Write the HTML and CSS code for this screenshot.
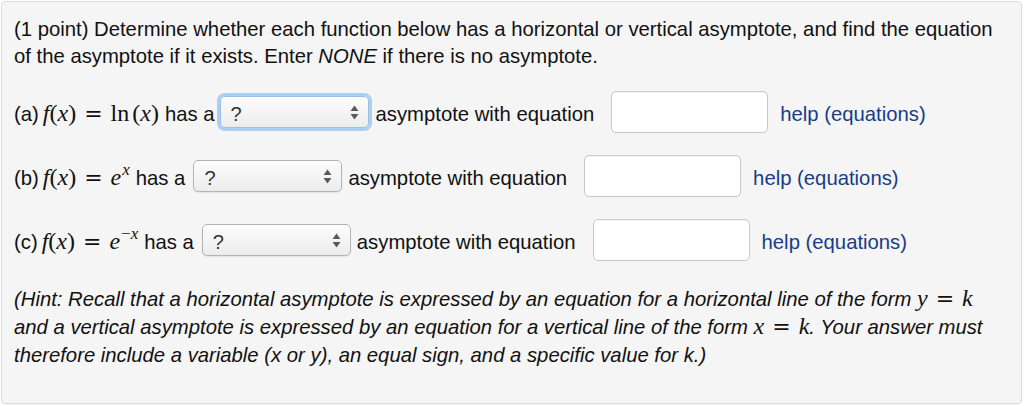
FILE: index.html
```html
<!DOCTYPE html>
<html>
<head>
<meta charset="utf-8">
<link rel="stylesheet" href="styles.css">
</head>
<body>
<div class="problem">
  <p class="intro">(1 point) Determine whether each function below has a horizontal or vertical asymptote, and find the equation<br>of the asymptote if it exists. Enter <em>NONE</em> if there is no asymptote.</p>

  <div class="row">
    <span class="txt">(a)</span>
    <span class="math"><i>f</i>(<i>x</i>)<span class="eq">=</span>ln<span class="thin"></span>(<i>x</i>)</span>
    <span class="txt has">has a</span>
    <span class="sel focus"><span class="q">?</span><svg class="arr" width="9" height="15" viewBox="0 0 9 15"><path d="M4.5 0.5 L8.5 6 L0.5 6 Z M0.5 9 L8.5 9 L4.5 14.5 Z" fill="#5a5a5a"/></svg></span>
    <span class="txt after">asymptote with equation</span>
    <input class="ans" type="text">
    <a class="help" href="#">help (equations)</a>
  </div>

  <div class="row">
    <span class="txt">(b)</span>
    <span class="math"><i>f</i>(<i>x</i>)<span class="eq">=</span><i>e</i><sup><i>x</i></sup></span>
    <span class="txt has">has a</span>
    <span class="sel"><span class="q">?</span><svg class="arr" width="9" height="15" viewBox="0 0 9 15"><path d="M4.5 0.5 L8.5 6 L0.5 6 Z M0.5 9 L8.5 9 L4.5 14.5 Z" fill="#5a5a5a"/></svg></span>
    <span class="txt after">asymptote with equation</span>
    <input class="ans" type="text">
    <a class="help" href="#">help (equations)</a>
  </div>

  <div class="row">
    <span class="txt">(c)</span>
    <span class="math"><i>f</i>(<i>x</i>)<span class="eq">=</span><i>e</i><sup>−<i>x</i></sup></span>
    <span class="txt has">has a</span>
    <span class="sel"><span class="q">?</span><svg class="arr" width="9" height="15" viewBox="0 0 9 15"><path d="M4.5 0.5 L8.5 6 L0.5 6 Z M0.5 9 L8.5 9 L4.5 14.5 Z" fill="#5a5a5a"/></svg></span>
    <span class="txt after">asymptote with equation</span>
    <input class="ans" type="text">
    <a class="help" href="#">help (equations)</a>
  </div>

  <p class="hint"><em>(Hint: Recall that a horizontal asymptote is expressed by an equation for a horizontal line of the form <span class="math"><i>y</i><span class="eq">=</span><i>k</i></span><br>and a vertical asymptote is expressed by an equation for a vertical line of the form <span class="math"><i>x</i><span class="eq">=</span><i>k</i></span>. Your answer must<br>therefore include a variable (x or y), an equal sign, and a specific value for k.)</em></p>
</div>
</body>
</html>
```

FILE: styles.css
```css
html, body {
  margin: 0;
  padding: 0;
  background: #ffffff;
}

body {
  padding: 1px 2px 1px 1px;
  font-family: "Liberation Sans", Arial, sans-serif;
  font-size: 20.3px;
  color: #111;
}

.problem {
  box-sizing: border-box;
  height: 403px;
  background: #f5f5f5;
  border: 1px solid #dcdcdc;
  border-radius: 4px;
  padding: 14px 12px 0 12px;
  box-shadow: 0 1px 1px rgba(0, 0, 0, 0.04);
}

.intro {
  margin: 0 0 10px 0;
  line-height: 27px;
  white-space: nowrap;
}

.row {
  display: flex;
  align-items: center;
  height: 64px;
  white-space: nowrap;
}

.txt {
  line-height: 26px;
  padding-top: 4px;
}

.math {
  font-family: "Liberation Serif", "Times New Roman", serif;
  font-size: 24px;
  line-height: 26px;
  padding-top: 3px;
  margin-left: 4px;
}

.math i {
  font-style: italic;
}

.math .eq {
  font-family: "DejaVu Serif", serif;
  font-style: normal;
  font-size: 22px;
  margin: 0 8px;
}

.math .thin {
  display: inline-block;
  width: 3px;
}

.math sup {
  font-size: 17px;
  line-height: 0;
  vertical-align: 10px;
  margin-left: 1px;
}

.has {
  margin-left: 6px;
}

.sel {
  box-sizing: border-box;
  display: flex;
  align-items: center;
  justify-content: space-between;
  width: 149px;
  height: 32px;
  margin-left: 8px;
  padding: 0 9px 0 10px;
  border: 1px solid #b4b4b4;
  border-radius: 5px;
  background: linear-gradient(#fdfdfd, #ececec);
  box-shadow: 0 1px 1px rgba(0, 0, 0, 0.08);
  color: #333;
}

.sel.focus {
  margin-left: 5px;
  border-color: #9dbfe3;
  box-shadow: 0 0 0 3px #a9cff5;
}

.sel .q {
  font-size: 20px;
  padding-top: 4px;
}

.sel .arr {
  display: block;
  margin-top: 1px;
}

.after {
  margin-left: 6px;
}

.sel.focus + .after {
  margin-left: 7px;
}

.ans {
  box-sizing: border-box;
  width: 157px;
  height: 42px;
  margin: 0 0 0 17px;
  padding: 0;
  border: 1px solid #c9c9c9;
  border-radius: 5px;
  background: #fff;
  box-shadow: inset 0 1px 1px rgba(0, 0, 0, 0.05);
  outline: none;
}

.help {
  margin-left: 12px;
  padding-top: 4px;
  line-height: 26px;
  color: #163d8a;
  text-decoration: none;
}

.hint {
  margin: 13px 0 0 0;
  line-height: 28px;
  font-style: italic;
  white-space: nowrap;
}

.hint em {
  font-style: italic;
}

.hint .math {
  padding-top: 0;
  margin-left: 0;
  font-style: normal;
}
```
